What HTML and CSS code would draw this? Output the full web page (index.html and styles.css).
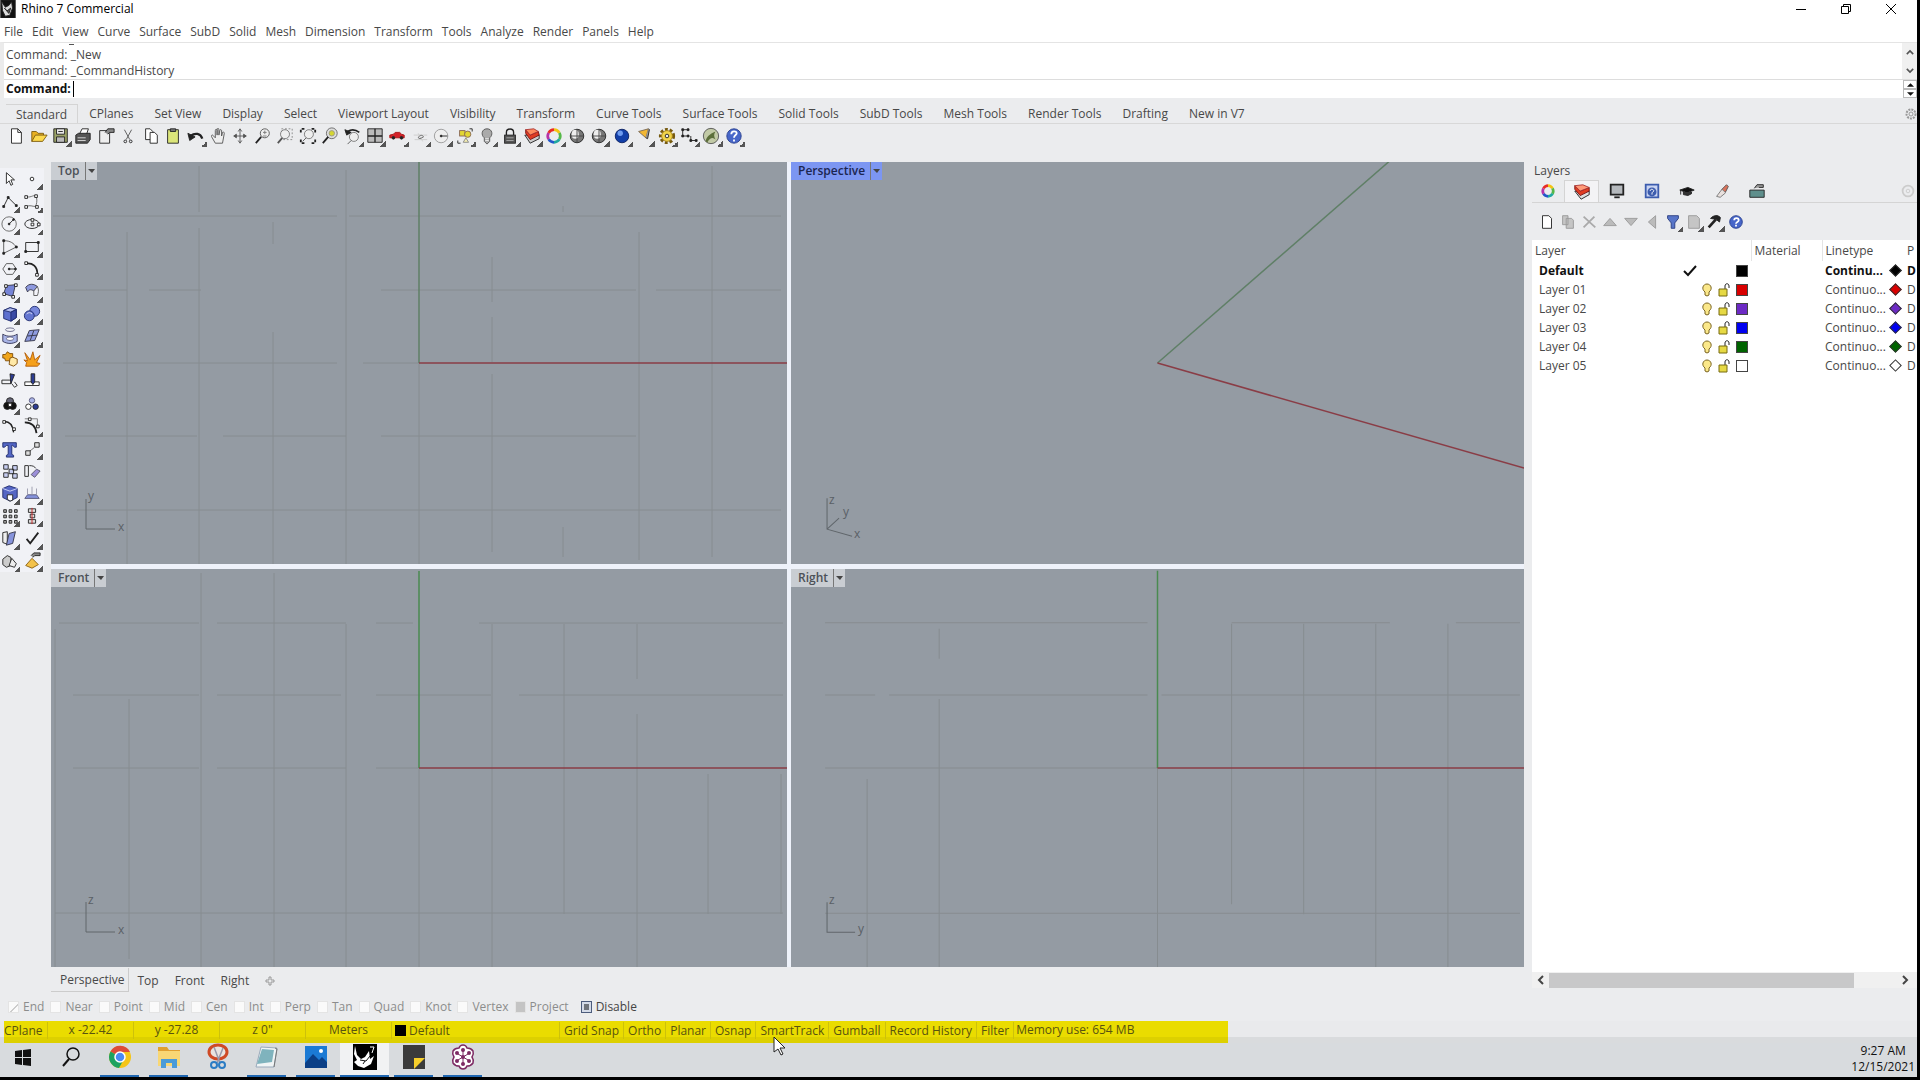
FILE: index.html
```html
<!DOCTYPE html>
<html lang="en">
<head>
  <meta charset="UTF-8" />
  <meta name="viewport" content="width=device-width, initial-scale=1.0" />
  <title>Rhino 7 Commercial</title>
  <link rel="stylesheet" href="styles.css">
</head>
<body>
  <header class="titlebar">
    <svg class="app-icon" viewBox="0 0 16 20"><rect width="16" height="20" fill="#111"/><path d="M1 2l4 6 4-2 3-4 1 7-3 8-5 1-3-6z" fill="#ddd"/><path d="M4 9l3 3 4-3-2 6z" fill="#555"/></svg>
    <h1>Rhino 7 Commercial</h1>
    <div class="window-buttons">
      <button aria-label="Minimize"><svg viewBox="0 0 12 12"><path d="M1 6.500h10"/></svg></button>
      <button aria-label="Restore"><svg viewBox="0 0 12 12"><path d="M1.500 3.500h7v7h-7zM3.500 3V1.500h7v7H9"/></svg></button>
      <button aria-label="Close"><svg viewBox="0 0 12 12"><path d="M1 1l10 10M11 1L1 11"/></svg></button>
    </div>
  </header>

  <nav class="menubar">
    <button>File</button><button>Edit</button><button>View</button><button>Curve</button><button>Surface</button><button>SubD</button><button>Solid</button><button>Mesh</button><button>Dimension</button><button>Transform</button><button>Tools</button><button>Analyze</button><button>Render</button><button>Panels</button><button>Help</button>
  </nav>

  <section class="command">
    <div class="history">
      <div class="history-lines">
        <div class="cut-line"></div>
        <p>Command: _New</p>
        <p>Command: _CommandHistory</p>
      </div>
      <div class="history-scroll">
        <button aria-label="Scroll up"><svg viewBox="0 0 10 8"><path d="M1 6l4-4 4 4"/></svg></button>
        <button aria-label="Scroll down"><svg viewBox="0 0 10 8"><path d="M1 2l4 4 4-4"/></svg></button>
      </div>
    </div>
    <div class="prompt">
      <label for="command">Command:</label>
      <span class="caret"></span>
      <input type="text" id="command" />
      <div class="spinner">
        <button aria-label="Previous"><svg viewBox="0 0 8 4"><path d="M4 0l4 4H0z"/></svg></button>
        <button aria-label="Next"><svg viewBox="0 0 8 4"><path d="M4 4L0 0h8z"/></svg></button>
      </div>
    </div>
  </section>

  <nav class="tabs">
    <button class="active">Standard</button><button>CPlanes</button><button>Set View</button><button>Display</button><button>Select</button><button>Viewport Layout</button><button>Visibility</button><button>Transform</button><button>Curve Tools</button><button>Surface Tools</button><button>Solid Tools</button><button>SubD Tools</button><button>Mesh Tools</button><button>Render Tools</button><button>Drafting</button><button>New in V7</button>
    <button class="tabs-gear" aria-label="Options"><svg viewBox="0 0 12 12"><circle cx="6" cy="6" r="4.500" stroke-width="2" stroke-dasharray="2 1"/><circle cx="6" cy="6" r="2"/></svg></button>
  </nav>

  <div class="toolbar">
    <button aria-label="New"><svg viewBox="0 0 20 20"><path d="M5 2h7l4 4v12H5z" fill="#fff"/><path d="M12 2v4h4"/></svg></button>
    <button aria-label="Open"><svg viewBox="0 0 20 20"><path d="M2 16V5h5l2 2h6v3" fill="#e8b020" stroke="#7a5a10"/><path d="M2 16l4-7h13l-5 7z" fill="#fcd94c" stroke="#7a5a10"/></svg></button>
    <button class="fly" aria-label="Save"><svg viewBox="0 0 20 20"><path d="M2 2h15v15H2z" fill="#9ba366"/><path d="M5 2h9v6H5z" fill="#e8e8e8"/><path d="M5 11h9v6H5z" fill="#bbb"/><path d="M7 5h5"/></svg></button>
    <button aria-label="Print"><svg viewBox="0 0 20 20"><path d="M6 8l3-6h7l-2 6" fill="#fff"/><path d="M2 9l3-2h13v7l-3 4H2z" fill="#555"/><path d="M4 12h9M4 15h9" stroke="#ddd"/></svg></button>
    <button aria-label="Properties"><svg viewBox="0 0 20 20"><path d="M3 4h8l3 3v11H3z" fill="#eee"/><path d="M9 6l3-4h7v4h-5l-2 2" fill="#888"/></svg></button>
    <button aria-label="Cut"><svg viewBox="0 0 20 20"><path d="M6 3l6 11M14 3L8 14" stroke="#555"/><circle cx="7" cy="16" r="1.500"/><circle cx="13" cy="16" r="1.500"/></svg></button>
    <button aria-label="Copy"><svg viewBox="0 0 20 20"><path d="M4 2h5l3 3v9H4z" fill="#fff"/><path d="M9 6h5l3 3v9H9z" fill="#fff"/></svg></button>
    <button aria-label="Paste"><svg viewBox="0 0 20 20"><path d="M4 3h12v15H4z" fill="#dce67a"/><path d="M7 2h6v3H7z" fill="#777"/></svg></button>
    <button class="fly" aria-label="Undo"><svg viewBox="0 0 20 20"><path d="M4 10c5-4 11-3 13 3" stroke-width="2.500"/><path d="M1 7l2 8 6-4z" fill="#222"/></svg></button>
    <button aria-label="Pan"><svg viewBox="0 0 20 20"><path d="M7 18l-4-7c-1-2 1-3 2-1l2 2V4c0-2 2-2 2 0v5V3c0-2 2-2 2 0v6l1-5c0-2 2-1 2 0v6l1-4c1-1 2 0 2 1l-2 11z" fill="#eee" stroke="#555"/></svg></button>
    <button aria-label="Rotate view"><svg viewBox="0 0 20 20"><path d="M10 3v14M4 10h12M8 5l2-3 2 3M8 15l2 3 2-3" stroke="#555"/><path d="M6 8l-3 2 3 2zM14 8l3 2-3 2z" fill="#555" stroke="#555"/></svg></button>
    <button aria-label="Zoom dynamic"><svg viewBox="0 0 20 20"><circle cx="12" cy="7" r="5" fill="#eee" stroke="#555"/><path d="M8 11l-6 7" stroke-width="2"/><path d="M12 4v4M10 6h4M10 10h4" stroke="#777"/></svg></button>
    <button aria-label="Zoom window"><svg viewBox="0 0 20 20"><path d="M6 2h12v12H6z" stroke-dasharray="2 2" stroke="#888"/><circle cx="10" cy="8" r="5" fill="#eee" stroke="#777"/><path d="M7 12l-5 6" stroke-width="2" stroke="#555"/></svg></button>
    <button aria-label="Zoom extents"><svg viewBox="0 0 20 20"><circle cx="11" cy="8" r="5" fill="#eee" stroke="#777"/><path d="M8 12l-4 4" stroke="#555"/><path d="M2 6V2h4M14 2h4v4M18 14v4h-4M6 18H2v-4" stroke-width="2" stroke-dasharray="3 2 3"/></svg></button>
    <button aria-label="Zoom selected"><svg viewBox="0 0 20 20"><circle cx="12" cy="7" r="6" fill="#ddd" stroke="#666"/><circle cx="12" cy="7" r="3" fill="#d5d630" stroke="#998"/><path d="M8 11l-6 7" stroke-width="2"/></svg></button>
    <button class="fly" aria-label="Undo view"><svg viewBox="0 0 20 20"><circle cx="11" cy="11" r="5" fill="#eee" stroke="#777"/><path d="M8 15l-4 4" stroke="#555"/><path d="M4 5c5-3 9-2 13 1" stroke-width="2"/><path d="M1 3l2 6 5-3z" fill="#222"/></svg></button>
    <button class="fly" aria-label="Viewports"><svg viewBox="0 0 20 20"><path d="M2 2h16v15H2z" fill="#bbb"/><path d="M10 2v15M2 10h16" stroke-width="1.500"/></svg></button>
    <button class="fly" aria-label="Set view"><svg viewBox="0 0 20 20"><path d="M2 12V9l4-1 2-2h5l2 2 3 1v3z" fill="#d3222a" stroke="#a11"/><circle cx="6" cy="12" r="1.500" fill="#222"/><circle cx="15" cy="12" r="1.500" fill="#222"/></svg></button>
    <button class="fly" aria-label="CPlane"><svg viewBox="0 0 20 20"><path d="M3 9h15M4 14h14M8 7l5 9" stroke="#ccc"/><path d="M8 12c2-4 5-3 6-1l-4 2z" stroke="#666"/></svg></button>
    <button class="fly" aria-label="Osnap"><svg viewBox="0 0 20 20"><circle cx="9" cy="10" r="7.500" fill="#eee" stroke="#999"/><path d="M9 10h7"/><circle cx="9" cy="10" r="1" fill="#333"/></svg></button>
    <button class="fly" aria-label="Select"><svg viewBox="0 0 20 20"><rect x="4" y="4" width="6" height="6" fill="#e2d634" stroke="#865"/><circle cx="13" cy="8" r="3.500" fill="#e2d634" stroke="#865"/><path d="M8 17l3-5 3 5z" fill="#f5eeb0" stroke="#888"/><path d="M15 2h3v3M2 15v3h3"/></svg></button>
    <button class="fly" aria-label="Hide"><svg viewBox="0 0 20 20"><path d="M7 12C3 9 4 2 10 2s7 7 3 10v4l-3 3-3-3z" fill="#aaa" stroke="#555"/><path d="M8 13h4M8 15h4" stroke="#eee"/></svg></button>
    <button class="fly" aria-label="Lock"><svg viewBox="0 0 20 20"><path d="M6 9V6c0-5 8-5 8 0v3" stroke-width="1.500"/><rect x="4" y="9" width="12" height="9" fill="#555"/><path d="M6 12h8M6 15h8" stroke="#aaa"/></svg></button>
    <button class="fly" aria-label="Layers"><svg viewBox="0 0 20 20"><path d="M2 9l6 9 10-5V9z" fill="#ccc"/><path d="M3 3l5 6 9-4 1 4-10 5-5-7z" fill="#e03c22" stroke="#711"/><path d="M3 3l9-1 5 3-9 4z" fill="#ff8a5c" stroke="#a33"/></svg></button>
    <button class="fly" aria-label="Properties"><svg viewBox="0 0 20 20" class="wheel"><path d="M10 3a7 7 0 0 1 6 3.500" stroke="#f3c412"/><path d="M16 6.500a7 7 0 0 1 0 7" stroke="#55b848"/><path d="M16 13.500a7 7 0 0 1-6 3.500" stroke="#20a8a0"/><path d="M10 17a7 7 0 0 1-6-3.500" stroke="#2357c9"/><path d="M4 13.500a7 7 0 0 1 0-7" stroke="#b632a8"/><path d="M4 6.500A7 7 0 0 1 10 3" stroke="#e82c25"/></svg></button>
    <button aria-label="Shade"><svg viewBox="0 0 20 20"><circle cx="10" cy="10" r="7.500" fill="#777"/><ellipse cx="8" cy="8" rx="4" ry="5" fill="#eee" stroke="none"/><path d="M3 10h14M10 3v14" stroke="#444"/></svg></button>
    <button class="fly" aria-label="Shade all"><svg viewBox="0 0 20 20"><circle cx="10" cy="10" r="7.500" fill="#777"/><ellipse cx="8" cy="8" rx="4" ry="5" fill="#eee" stroke="none"/><path d="M3 10h14M10 3v14" stroke="#444"/></svg></button>
    <button class="fly" aria-label="Render"><svg viewBox="0 0 20 20"><circle cx="10" cy="10" r="7.500" fill="#123fa8" stroke="#0a1f60"/><circle cx="8" cy="7" r="3" fill="#6f9cf0" stroke="none"/></svg></button>
    <button class="fly" aria-label="Spotlight"><svg viewBox="0 0 20 20"><path d="M4 5l11-3-3 10z" fill="#f2b733" stroke="#765"/><path d="M15 2l1 1-2 10-2-1" fill="#999"/></svg></button>
    <button class="fly" aria-label="Options"><svg viewBox="0 0 20 20"><circle cx="10" cy="10" r="7" stroke="#765a10" stroke-width="4" stroke-dasharray="3 2"/><circle cx="10" cy="10" r="6" fill="#f0d34a" stroke="#a8841a"/><circle cx="10" cy="10" r="2" fill="#eee"/></svg></button>
    <button class="fly" aria-label="History"><svg viewBox="0 0 20 20"><path d="M9 3H3v7h6M12 10v5h6"/><path d="M8 2h2v2H8zM2 2h2v2H2zM2 9h2v2H2zM8 9h2v2H8zM11 14h2v2h-2zM17 14h2v2h-2z" fill="#222"/></svg></button>
    <button class="fly" aria-label="Grasshopper"><svg viewBox="0 0 20 20"><circle cx="10" cy="10" r="8.500" fill="#c2caa6" stroke="#555"/><path d="M4 16c1-5 4-8 11-11-2 3-2 5 0 9-3-3-6-2-9 3z" fill="#5c6f3a" stroke="none"/></svg></button>
    <button class="fly" aria-label="Help"><svg viewBox="0 0 20 20"><circle cx="10" cy="10" r="8" fill="#4766c9" stroke="#28408f"/><path d="M7 8c0-4 6-4 6-1 0 2-3 2-3 5M10 14v2" stroke="#fff" stroke-width="2"/></svg></button>
  </div>

  <main class="workspace">
    <aside class="sidebar">
      <div class="tools">
        <button aria-label="Select"><svg viewBox="0 0 20 20"><path d="M6 3v12l3-3 2 5 2-1-2-5h4z" fill="#fff"/></svg></button>
        <button class="fly" aria-label="Point"><svg viewBox="0 0 20 20"><circle cx="10" cy="10" r="2" fill="#fff"/></svg></button>
        <button class="fly" aria-label="Polyline"><svg viewBox="0 0 20 20"><path d="M3 15L8 5l9 9"/><path d="M2 14h2v2H2zM7 4h2v2H7zM16 13h2v2h-2z" fill="#222"/></svg></button>
        <button class="fly" aria-label="Curve"><svg viewBox="0 0 20 20"><path d="M4 4c5 2 9-4 11 1 1 4 0 7-1 10-4 0-6-2-10 0" stroke="#666"/><path d="M2 3h3v3H2zM13 2h3v3h-3zM2 14h3v3H2zM14 14h3v3h-3z" fill="#fff"/></svg></button>
        <button class="fly" aria-label="Circle"><svg viewBox="0 0 20 20"><circle cx="9" cy="10" r="8" stroke="#666"/><path d="M9 10l5-5"/><circle cx="9" cy="10" r="1" fill="#222"/><circle cx="14" cy="5" r="1" fill="#222"/></svg></button>
        <button class="fly" aria-label="Ellipse"><svg viewBox="0 0 20 20"><ellipse cx="10" cy="10" rx="8" ry="5"/><path d="M9 4h3v3H9zM9 9h3v3H9zM16 9h3v3h-3z" fill="#fff"/></svg></button>
        <button class="fly" aria-label="Arc"><svg viewBox="0 0 20 20"><path d="M3 17V3c8 0 11 3 14 7z" stroke="#555"/><path d="M2 2h2v2H2zM2 16h2v2H2zM16 9h2v2h-2z" fill="#222"/></svg></button>
        <button class="fly" aria-label="Rectangle"><svg viewBox="0 0 20 20"><path d="M3 5h14v10H3z"/><path d="M2 14h2v2H2zM16 4h2v2h-2z" fill="#222"/></svg></button>
        <button class="fly" aria-label="Polygon"><svg viewBox="0 0 20 20"><path d="M6 4h7l4 6-4 6H6l-4-6z" stroke="#555"/><path d="M9 10h7"/><circle cx="9" cy="10" r="1" fill="#222"/><circle cx="16" cy="10" r="1" fill="#222"/></svg></button>
        <button class="fly" aria-label="Fillet"><svg viewBox="0 0 20 20"><path d="M3 4c8-1 13 3 13 12" stroke-width="2"/><path d="M2 2h3v3H2zM14 15h3v3h-3z" fill="#fff"/></svg></button>
        <button class="fly" aria-label="Surface from points"><svg viewBox="0 0 20 20"><path d="M6 4l10-1-3 13-10-3z" fill="#7684d6" stroke="#334"/><path d="M4 3h3v3H4zM15 2h3v3h-3zM2 12h3v3H2zM12 15h3v3h-3z" fill="#fff"/></svg></button>
        <button class="fly" aria-label="Sweep"><svg viewBox="0 0 20 20"><path d="M3 6c4-5 9-4 13-1l-4 5c-3-2-5-2-7 1z" fill="#8d98de" stroke="#334"/><path d="M12 10l4-5c2 4 1 7 0 10h-4z" fill="#f4f4fa" stroke="#555"/></svg></button>
        <button class="fly" aria-label="Box"><svg viewBox="0 0 20 20"><path d="M3 6l7-3 7 2v9l-6 4-8-3z" fill="#5e70cf" stroke="#1f2b6d"/><path d="M3 6l8 2 6-3-7-2z" fill="#b4beef" stroke="#1f2b6d"/><path d="M11 8l6-3v9l-6 4z" fill="#3a4aa6" stroke="#1f2b6d"/></svg></button>
        <button class="fly" aria-label="Sphere union"><svg viewBox="0 0 20 20"><circle cx="13" cy="7" r="5.500" fill="#7787db" stroke="#1f2b6d"/><circle cx="7" cy="12" r="5.500" fill="#6375d0" stroke="#1f2b6d"/><path d="M4 10c2-2 4-2 6 0" stroke="#dde"/></svg></button>
        <button class="fly" aria-label="Project"><svg viewBox="0 0 20 20"><ellipse cx="10" cy="3" rx="5" ry="2" stroke="#668"/><path d="M2 8c5 3 11 3 16 0v8c-5 3-11 3-16 0z" fill="#a9b5e8" stroke="#335"/><ellipse cx="10" cy="13" rx="4" ry="2" fill="#fff" stroke="#668"/></svg></button>
        <button class="fly" aria-label="Mesh"><svg viewBox="0 0 20 20"><path d="M7 4l11-1-5 12-11 1z" fill="#8f9ce0" stroke="#334"/><path d="M5 10l11-1M12 4L8 15" stroke="#334"/></svg></button>
        <button aria-label="Boolean"><svg viewBox="0 0 20 20"><path d="M2 5h3l2-3 3 2h3v5l-3 3H5l-1-3H2z" fill="#f0a51c" stroke="#7c4b08"/><path d="M10 9l3-1 5 2v5l-4 3-5-2z" fill="#ffe9a8" stroke="#7c4b08"/></svg></button>
        <button aria-label="Explode"><svg viewBox="0 0 20 20"><path d="M2 3l6 8 3-9 2 9 6-5-4 8 4 1-3 3H3l1-4-3-3 4 1z" fill="#f5a01c" stroke="#b35c08"/></svg></button>
        <button aria-label="Trim"><svg viewBox="0 0 20 20"><path d="M1 9h10v4H1zM12 13l3 4 3-2-3-4"/><path d="M10 2l5 1-4 10z" fill="#2c3c94"/></svg></button>
        <button aria-label="Split"><svg viewBox="0 0 20 20"><path d="M2 11h16v4H2z" fill="#fff"/><path d="M9 2h4v9l-2 3-2-3z" fill="#2c3c94"/></svg></button>
        <button class="fly" aria-label="Group"><svg viewBox="0 0 20 20"><circle cx="10" cy="7" r="4" fill="#667"/><circle cx="7" cy="12" r="4" fill="#111"/><circle cx="13" cy="12" r="4" fill="#111"/><circle cx="10" cy="11" r="2" fill="#fff"/></svg></button>
        <button aria-label="Ungroup"><svg viewBox="0 0 20 20"><circle cx="10" cy="6" r="3" fill="#aab4e8" stroke="#557"/><circle cx="6" cy="13" r="3" fill="#fff"/><circle cx="14" cy="13" r="3" fill="#2c3c94"/></svg></button>
        <button aria-label="Edit points"><svg viewBox="0 0 20 20"><path d="M4 5c6 0 9 4 10 12" stroke-width="1.500"/><path d="M2 4h3v3H2zM13 12h3v3h-3z" fill="#fff"/></svg></button>
        <button class="fly" aria-label="Control points"><svg viewBox="0 0 20 20"><path d="M2 6c8 0 12 4 13 12" stroke-width="2"/><path d="M2 2h14v8" stroke="#777"/><path d="M6 1h3v3H6zM15 9h3v3h-3z" fill="#fff"/></svg></button>
        <button aria-label="Text"><svg viewBox="0 0 20 20"><path d="M2 3h15v5h-2l-2-2h-1v10l2 1v2H6v-2l2-1V6H6L4 8H2z" fill="#5467c5" stroke="#1f2b6d"/></svg></button>
        <button class="fly" aria-label="Move"><svg viewBox="0 0 20 20"><path d="M3 12h5v5H3zM13 3h5v5h-5z" fill="#ddd"/><path d="M8 12l5-4" stroke-dasharray="2 1"/></svg></button>
        <button aria-label="Array"><svg viewBox="0 0 20 20"><path d="M3 3h5v5H3zM3 12h5v5H3zM9 8h5v5H9zM13 4h5v5h-5zM13 13h5v5h-5z" fill="#c7cdf0"/></svg></button>
        <button aria-label="Orient"><svg viewBox="0 0 20 20"><path d="M2 4h4v12H2z"/><path d="M9 14l6-6 4 2-6 7z" fill="#9b8fd8" stroke="#556"/><path d="M7 4c4 0 6 1 7 3"/></svg></button>
        <button class="fly" aria-label="Blend"><svg viewBox="0 0 20 20"><path d="M2 5l7-3 9 3v10l-8 4-8-4z" fill="#5566c4" stroke="#1f2b6d"/><path d="M2 5l8 3 8-3" stroke="#cfd6fa"/><path d="M7 12h6v6l-3 1-3-2z" fill="#fff"/></svg></button>
        <button class="fly" aria-label="Lights"><svg viewBox="0 0 20 20"><path d="M2 16h16l-3-4H5z" fill="#8593dc" stroke="#557"/><path d="M5 5v7M10 3v9M15 5v7" stroke="#99a"/></svg></button>
        <button class="fly" aria-label="Grid array"><svg viewBox="0 0 20 20"><path d="M3 3h3v3H3zM9 3h3v3H9zM15 3h3v3h-3zM3 9h3v3H3zM9 9h3v3H9zM15 9h3v3h-3zM3 15h3v3H3zM9 15h3v3H9zM15 15h3v3h-3z" fill="#aaa"/></svg></button>
        <button class="fly" aria-label="Align"><svg viewBox="0 0 20 20"><path d="M6 2h8v4H6zM8 8h5v4H8zM6 14h8v4H6z" fill="#ddd"/><path d="M10 1v18" stroke="#c22"/></svg></button>
        <button class="fly" aria-label="Block"><svg viewBox="0 0 20 20"><path d="M2 4l5-1v14l-5-2z" fill="#eee"/><path d="M9 5l7-2-3 13-7 2z" fill="#8794dc" stroke="#334"/></svg></button>
        <button class="fly" aria-label="Check"><svg viewBox="0 0 20 20"><path d="M4 11l4 5 9-12" stroke-width="2"/></svg></button>
        <button class="fly" aria-label="Primitives"><svg viewBox="0 0 20 20"><path d="M2 8l5-4 4 2v9l-5 2-4-3z" fill="#ccc"/><path d="M9 15l3-8 5 6-2 4z" fill="#eee"/></svg></button>
        <button class="fly" aria-label="Named position"><svg viewBox="0 0 20 20"><path d="M3 15l7-8 7 7-7 4z" fill="#f3c24a" stroke="#8a6010"/><path d="M9 4l3-3h7v3h-6l-2 2" fill="#888"/></svg></button>
      </div>
    </aside>

    <section class="stage">
      <div class="viewports">
        <div class="viewport">
          <svg class="scene" viewBox="0 0 736 402" preserveAspectRatio="xMidYMid slice">
            <g class="grid">
              <path d="M76 70V402M148 4V50M148 66V402M222 60V82M222 170V402M295 8V402M368 201V402M441 95V140M441 155V200M441 212V390M512 44V50M512 365V395M588 70V398M661 4V395"/>
              <path d="M2 54H286M298 54H730M14 128H76M98 128H150M330 128H585M605 128H730M12 201H286M312 201H368M14 274H146M172 274H295M330 274H585M26 348H730"/>
            </g>
            <path class="axis-y" d="M368 0V201"/>
            <path class="axis-x" d="M368 201H736"/>
            <path class="tripod" d="M35 337V367H64"/>
            <text x="37" y="338">y</text><text x="67" y="369">x</text>
          </svg>
          <div class="vp-tag"><button>Top</button><button class="vp-menu" aria-label="Top menu"><svg viewBox="0 0 7 4"><path d="M0 0h7L4 4z"/></svg></button></div>
        </div>
        <div class="viewport">
          <svg class="scene" viewBox="0 0 732 402" preserveAspectRatio="xMidYMid slice">
            <path class="axis-y" d="M366 201L597 0"/>
            <path class="axis-x" d="M366 201L732 306"/>
            <path class="tripod" d="M36 336V367L61 374M36 367L48 356"/>
            <text x="38" y="342">z</text><text x="52" y="354">y</text><text x="63" y="376">x</text>
          </svg>
          <div class="vp-tag active"><button>Perspective</button><button class="vp-menu" aria-label="Perspective menu"><svg viewBox="0 0 7 4"><path d="M0 0h7L4 4z"/></svg></button></div>
        </div>
        <div class="viewport">
          <svg class="scene" viewBox="0 0 736 398" preserveAspectRatio="xMidYMid slice">
            <g class="grid">
              <path d="M4 60V398M78 130V390M150 4V398M223 4V398M295 55V398M368 199V398M441 55V398M513 55V345M586 55V110M586 145V398M657 205V345M730 205V345"/>
              <path d="M8 54H148M166 54H295M325 54H362M428 54H732M22 126H148M166 126H290M325 126H440M468 126H732M22 199H148M166 199H295M325 199H368M4 344H732"/>
            </g>
            <path class="axis-y bright" d="M368 2V199"/>
            <path class="axis-x" d="M368 199H736"/>
            <path class="tripod" d="M35 333V363H64"/>
            <text x="37" y="335">z</text><text x="67" y="365">x</text>
          </svg>
          <div class="vp-tag"><button>Front</button><button class="vp-menu" aria-label="Front menu"><svg viewBox="0 0 7 4"><path d="M0 0h7L4 4z"/></svg></button></div>
        </div>
        <div class="viewport">
          <svg class="scene" viewBox="0 0 732 398" preserveAspectRatio="xMidYMid slice">
            <g class="grid">
              <path d="M76 210V398M148 60V90M148 130V398M366 199V398M440 55V335M512 55V345M584 55V398M656 55V398"/>
              <path d="M34 54H356M440 54H598M664 54H728M34 126H84M98 126H356M370 126H728M34 199H366M34 344H728"/>
            </g>
            <path class="axis-y bright" d="M366 2V199"/>
            <path class="axis-x" d="M366 199H732"/>
            <path class="tripod" d="M36 333V363H64"/>
            <text x="38" y="335">z</text><text x="67" y="364">y</text>
          </svg>
          <div class="vp-tag"><button>Right</button><button class="vp-menu" aria-label="Right menu"><svg viewBox="0 0 7 4"><path d="M0 0h7L4 4z"/></svg></button></div>
        </div>
      </div>
      <nav class="view-tabs">
        <button class="active">Perspective</button><button>Top</button><button>Front</button><button>Right</button>
        <button aria-label="New viewport"><svg viewBox="0 0 10 10"><path d="M4 1h2v3h3v2H6v3H4V6H1V4h3z"/></svg></button>
      </nav>
    </section>

    <aside class="panel">
      <h2>Layers</h2>
      <div class="panel-tabs">
        <button aria-label="Properties"><svg viewBox="0 0 20 20" class="wheel"><path d="M10 4a6 6 0 0 1 5 3" stroke="#f3c412"/><path d="M15 7a6 6 0 0 1 0 6" stroke="#55b848"/><path d="M15 13a6 6 0 0 1-5 3" stroke="#20a8a0"/><path d="M10 16a6 6 0 0 1-5-3" stroke="#2357c9"/><path d="M5 13a6 6 0 0 1 0-6" stroke="#b632a8"/><path d="M5 7a6 6 0 0 1 5-3" stroke="#e82c25"/></svg></button>
        <button class="active" aria-label="Layers"><svg viewBox="0 0 20 20"><path d="M2 9l7 9 9-5V9z" fill="#ddd"/><path d="M2 3l6 6 10-4v4l-10 5-6-7z" fill="#e03c22" stroke="#711"/><path d="M2 3l9-1 7 3-10 4z" fill="#ff9a78" stroke="#a33"/></svg></button>
        <button aria-label="Display"><svg viewBox="0 0 20 20"><path d="M3 3h14v11H3z" fill="#b5b9bd" stroke-width="2"/><path d="M7 17h6" stroke-width="2"/></svg></button>
        <button aria-label="Help"><svg viewBox="0 0 20 20"><path d="M3 3h14v14H3z" fill="#c9d4f2" stroke="#3c5cae" stroke-width="2"/><circle cx="10" cy="11" r="5" fill="#3c5cae" stroke="none"/><path d="M8 10c0-3 4-2 4 0l-2 2v2" stroke="#fff"/></svg></button>
        <button aria-label="Tutorials"><svg viewBox="0 0 20 20"><path d="M2 9l9-3 7 3-8 3z" fill="#111"/><path d="M6 11v3l5 1 4-2v-2" fill="#333"/><path d="M3 9v5"/></svg></button>
        <button aria-label="Libraries"><svg viewBox="0 0 20 20"><path d="M10 8l5-5 2 2-3 6-5 4z" fill="#d9735c" stroke="#555"/><path d="M10 8l4 4-6 5-4-1z" fill="#e8e0dd" stroke="#777"/></svg></button>
        <button aria-label="Notes"><svg viewBox="0 0 20 20"><path d="M2 9h16v8H2z" fill="#5f8f8c"/><path d="M7 7l3-4h7v3h-5" fill="#999"/></svg></button>
        <button class="panel-gear" aria-label="Panel options"><svg viewBox="0 0 20 20"><circle cx="10" cy="10" r="6" stroke="#ccc" stroke-width="2"/><circle cx="10" cy="10" r="2" stroke="#ccc"/></svg></button>
      </div>
      <div class="panel-tools">
        <button aria-label="New layer"><svg viewBox="0 0 20 20"><path d="M5 3h7l3 3v11H5z" fill="#fff"/></svg></button>
        <button aria-label="New sublayer"><svg viewBox="0 0 20 20"><path d="M4 3h6v10H4zM8 6h6l2 2v9H8z" fill="#c5c5c5" stroke="#999"/></svg></button>
        <button aria-label="Delete"><svg viewBox="0 0 20 20"><path d="M4 4l13 12M16 4L4 16" stroke="#aaa" stroke-width="2"/></svg></button>
        <button aria-label="Move up"><svg viewBox="0 0 20 20"><path d="M3 14l7-8 7 8z" fill="#bbb" stroke="#999"/></svg></button>
        <button aria-label="Move down"><svg viewBox="0 0 20 20"><path d="M3 6l7 8 7-8z" fill="#bbb" stroke="#999"/></svg></button>
        <button aria-label="Move left"><svg viewBox="0 0 20 20"><path d="M14 3l-8 7 8 7z" fill="#bbb" stroke="#999"/></svg></button>
        <button class="fly" aria-label="Filter"><svg viewBox="0 0 20 20"><path d="M4 3h12v3l-4 5v6H8v-6L4 6z" fill="#5875c8" stroke="#2a3d80"/></svg></button>
        <button class="fly" aria-label="Layer states"><svg viewBox="0 0 20 20"><path d="M4 3h9l3 3v11H4z" fill="#c5c5c5" stroke="#999"/></svg></button>
        <button class="fly" aria-label="Tools"><svg viewBox="0 0 20 20"><path d="M3 16l8-9" stroke-width="3"/><path d="M5 6c4-4 8-4 11-1l-1 5-4-3z" fill="#222"/></svg></button>
        <button aria-label="Help"><svg viewBox="0 0 20 20"><circle cx="10" cy="10" r="7" fill="#4766c9" stroke="#28408f"/><path d="M8 8c0-3 5-3 5 0 0 2-3 2-3 4M10 13v2" stroke="#fff" stroke-width="2"/></svg></button>
      </div>
      <div class="layer-list">
        <table>
          <colgroup><col class="c-name"><col class="c-icon"><col class="c-icon"><col class="c-icon"><col class="c-icon"><col class="c-mat"><col class="c-line"><col class="c-print"><col></colgroup>
          <thead>
            <tr><th>Layer</th><th></th><th></th><th></th><th></th><th class="sep">Material</th><th class="sep">Linetype</th><th></th><th>P</th></tr>
          </thead>
          <tbody>
            <tr class="current"><td>Default</td><td><svg viewBox="0 0 14 14"><path d="M1 7l4 4 8-9" stroke="#111" stroke-width="2"/></svg></td><td></td><td></td><td><i class="swatch black"></i></td><td></td><td>Continu...</td><td><i class="diamond black"></i></td><td>D</td></tr>
            <tr><td>Layer 01</td><td></td><td><svg viewBox="0 0 14 14"><path d="M5 9C1 6 3 1 7 1s6 5 2 8v3l-2 1-2-1z" fill="#fbe88a" stroke="#7a6420"/></svg></td><td><svg viewBox="0 0 14 14"><path d="M8 6V3c0-3 4-3 4 0v2"/><path d="M2 6h8v7H2z" fill="#e6d944" stroke="#776a10"/></svg></td><td><i class="swatch red"></i></td><td></td><td>Continuo...</td><td><i class="diamond red"></i></td><td>D</td></tr>
            <tr><td>Layer 02</td><td></td><td><svg viewBox="0 0 14 14"><path d="M5 9C1 6 3 1 7 1s6 5 2 8v3l-2 1-2-1z" fill="#fbe88a" stroke="#7a6420"/></svg></td><td><svg viewBox="0 0 14 14"><path d="M8 6V3c0-3 4-3 4 0v2"/><path d="M2 6h8v7H2z" fill="#e6d944" stroke="#776a10"/></svg></td><td><i class="swatch purple"></i></td><td></td><td>Continuo...</td><td><i class="diamond purple"></i></td><td>D</td></tr>
            <tr><td>Layer 03</td><td></td><td><svg viewBox="0 0 14 14"><path d="M5 9C1 6 3 1 7 1s6 5 2 8v3l-2 1-2-1z" fill="#fbe88a" stroke="#7a6420"/></svg></td><td><svg viewBox="0 0 14 14"><path d="M8 6V3c0-3 4-3 4 0v2"/><path d="M2 6h8v7H2z" fill="#e6d944" stroke="#776a10"/></svg></td><td><i class="swatch blue"></i></td><td></td><td>Continuo...</td><td><i class="diamond blue"></i></td><td>D</td></tr>
            <tr><td>Layer 04</td><td></td><td><svg viewBox="0 0 14 14"><path d="M5 9C1 6 3 1 7 1s6 5 2 8v3l-2 1-2-1z" fill="#fbe88a" stroke="#7a6420"/></svg></td><td><svg viewBox="0 0 14 14"><path d="M8 6V3c0-3 4-3 4 0v2"/><path d="M2 6h8v7H2z" fill="#e6d944" stroke="#776a10"/></svg></td><td><i class="swatch green"></i></td><td></td><td>Continuo...</td><td><i class="diamond green"></i></td><td>D</td></tr>
            <tr><td>Layer 05</td><td></td><td><svg viewBox="0 0 14 14"><path d="M5 9C1 6 3 1 7 1s6 5 2 8v3l-2 1-2-1z" fill="#fbe88a" stroke="#7a6420"/></svg></td><td><svg viewBox="0 0 14 14"><path d="M8 6V3c0-3 4-3 4 0v2"/><path d="M2 6h8v7H2z" fill="#e6d944" stroke="#776a10"/></svg></td><td><i class="swatch white"></i></td><td></td><td>Continuo...</td><td><i class="diamond white"></i></td><td>D</td></tr>
          </tbody>
        </table>
      </div>
      <div class="hscroll">
        <button aria-label="Scroll left"><svg viewBox="0 0 8 10"><path d="M6 1L2 5l4 4"/></svg></button>
        <div class="track"><div class="thumb"></div></div>
        <button aria-label="Scroll right"><svg viewBox="0 0 8 10"><path d="M2 1l4 4-4 4"/></svg></button>
      </div>
    </aside>
  </main>

  <form class="osnap">
    <label><input type="checkbox" checked>End</label>
    <label><input type="checkbox">Near</label>
    <label><input type="checkbox">Point</label>
    <label><input type="checkbox">Mid</label>
    <label><input type="checkbox">Cen</label>
    <label><input type="checkbox">Int</label>
    <label><input type="checkbox">Perp</label>
    <label><input type="checkbox">Tan</label>
    <label><input type="checkbox">Quad</label>
    <label><input type="checkbox">Knot</label>
    <label><input type="checkbox">Vertex</label>
    <label><input type="checkbox" class="grey">Project</label>
    <label class="disable"><input type="checkbox" class="filled">Disable</label>
  </form>

  <footer class="status-row">
    <div class="status">
      <button class="s-plane">CPlane</button><span class="s-coord">x -22.42</span><span class="s-coord">y -27.28</span><span class="s-coord">z 0"</span><span class="s-coord">Meters</span><button class="s-layer"><i></i>Default</button><button>Grid Snap</button><button>Ortho</button><button>Planar</button><button>Osnap</button><button>SmartTrack</button><button>Gumball</button><button>Record History</button><button>Filter</button><span class="s-memory">Memory use: 654 MB</span>
    </div>
  </footer>

  <div class="taskbar">
    <button aria-label="Start"><svg viewBox="0 0 24 28"><path d="M4 8l7-1v7H4zM12 7l8-1v8h-8zM4 15h7v7l-7-1zM12 15h8v8l-8-1z" fill="#111" stroke="none"/></svg></button>
    <button aria-label="Search"><svg viewBox="0 0 24 28"><circle cx="14" cy="11" r="6" stroke="#111" stroke-width="1.500"/><path d="M10 16l-6 7" stroke="#111" stroke-width="2"/></svg></button>
    <button class="open" aria-label="Chrome"><svg viewBox="0 0 24 28"><circle cx="12" cy="14" r="11" fill="#f5c518" stroke="none"/><path d="M12 14L2.500 8.500A11 11 0 0 1 22 9H12z" fill="#dd4b39" stroke="none"/><path d="M12 14L2.500 8.500A11 11 0 0 0 11 25l5-9z" fill="#1da260" stroke="none"/><circle cx="12" cy="14" r="5" fill="#4a8af4" stroke="#fff" stroke-width="1.500"/></svg></button>
    <button class="open" aria-label="Explorer"><svg viewBox="0 0 24 28"><path d="M1 4h9l2 3h11v6H1z" fill="#e0a030" stroke="none"/><path d="M1 8h22v15H1z" fill="#f8d775" stroke="none"/><path d="M4 25v-9h16v9h-5v-5H9v5z" fill="#4a9bd8" stroke="none"/></svg></button>
    <button aria-label="Snipping Tool"><svg viewBox="0 0 24 28"><ellipse cx="12" cy="9" rx="9" ry="7" fill="#e9e3df" stroke="#cf4a25" stroke-width="3"/><path d="M8 4l6 16M17 5l-6 15" stroke="#99a" stroke-width="1.500"/><circle cx="8" cy="22" r="3" stroke="#2b7cc4" stroke-width="2"/><circle cx="16" cy="22" r="3" stroke="#2b7cc4" stroke-width="2"/></svg></button>
    <button class="open" aria-label="Notepad"><svg viewBox="0 0 24 28"><path d="M6 4l16 1-3 19H1z" fill="#f0f4f5" stroke="#9ab" /><path d="M7 6l12 1-2 12-15 2z" fill="#7fb3bd" stroke="none"/><path d="M20 5l2 1-3 18" stroke="#777"/></svg></button>
    <button class="open" aria-label="Photos"><svg viewBox="0 0 24 28"><path d="M1 3h22v22H1z" fill="#1b7ad4" stroke="none"/><path d="M1 20l8-9 6 6 3-3 5 5v6H1z" fill="#0b3f86" stroke="none"/><circle cx="17" cy="8" r="2" fill="#fff" stroke="none"/></svg></button>
    <button class="open active" aria-label="Rhino"><svg viewBox="0 0 24 28"><path d="M0 1h24v26H0z" fill="#000" stroke="none"/><path d="M2 3l2 9 4 4 4-2 4-6 1 8 4-3-3 8-7 4-6-2-4-4 3-2-3-6z" fill="#fff" stroke="none"/><path d="M7 17l6 1 4-5M10 21l2-3" stroke="#111"/><path d="M17 4h4l-2 6" stroke="#fff"/></svg></button>
    <button class="open" aria-label="Sticky Notes"><svg viewBox="0 0 24 28"><path d="M1 2h22v24H1z" fill="#3b3b3b" stroke="none"/><path d="M12 15h11L12 26z" fill="#f7cf2b" stroke="none"/></svg></button>
    <button class="open" aria-label="GoToMeeting"><svg viewBox="0 0 24 28"><path d="M12 2q3 0 4 3 4 0 6 3 1 3-1 6 2 3 1 6-2 3-6 3-1 3-4 3t-4-3q-4 0-6-3-1-3 1-6-2-3-1-6 2-3 6-3 1-3 4-3z" fill="#fff" stroke="#7d2a63" stroke-width="1.500"/><path d="M12 8v12M7 11l10 6M17 11L7 17" stroke="#7d2a63"/><g fill="#7d2a63" stroke="none"><circle cx="12" cy="14" r="2"/><circle cx="12" cy="7" r="2"/><circle cx="12" cy="21" r="2"/><circle cx="6" cy="10" r="2"/><circle cx="18" cy="10" r="2"/><circle cx="6" cy="18" r="2"/><circle cx="18" cy="18" r="2"/></g></svg></button>
    <div class="clock"><span>9:27 AM</span><span>12/15/2021</span></div>
  </div>

  <svg class="cursor" viewBox="0 0 14 20"><path d="M1 1v15l4-3 3 6 2-1-3-6h5z" fill="#fff" stroke="#222"/></svg>
</body>
</html>
```
FILE: styles.css
```css
* {
  box-sizing: border-box;
}
body {
  font-family: "Open Sans", "Noto Sans", sans-serif;
  font-size: 12px;
  line-height: 16px;
  color: #484848;
  background-color: #ebecee;
  margin: 0;
  height: 100vh;
  display: flex;
  flex-direction: column;
  overflow: hidden;
  border-right: 3px solid #000;
  border-bottom: 3px solid #000;
}
h1, h2, p {
  margin: 0;
  font-size: 12px;
  font-weight: normal;
}
button {
  font: inherit;
  color: inherit;
  background: none;
  border: none;
  padding: 0;
  white-space: nowrap;
}
svg {
  display: block;
  fill: none;
  stroke: #222;
}

/* title and menu */
.titlebar {
  display: flex;
  align-items: center;
  height: 18px;
  background: #fff;
  color: #000;
}
.app-icon {
  width: 16px;
  height: 18px;
  margin-right: 5px;
}
.window-buttons {
  display: flex;
  margin-left: auto;
  padding-right: 4px;
}
.window-buttons button {
  width: 45px;
  display: flex;
  justify-content: center;
}
.window-buttons svg {
  width: 12px;
  height: 12px;
  stroke: #000;
}
.menubar {
  display: flex;
  align-items: center;
  gap: 9px;
  height: 24px;
  padding: 3px 0 0 4px;
  background: #fff;
}

/* command line */
.command {
  border-top: 1px solid #e4e4e4;
  border-left: 4px solid #ebebeb;
}
.history {
  display: flex;
  height: 36px;
  background: #fff;
}
.history-lines {
  flex: 1;
  display: flex;
  flex-direction: column;
  justify-content: flex-end;
  padding-left: 2px;
}
/* bottom edge of the line scrolled out of view */
.cut-line {
  width: 5px;
  height: 1px;
  margin: 0 0 2px 63px;
  background: #555;
}
.history-scroll {
  width: 15px;
  display: flex;
  flex-direction: column;
  justify-content: space-around;
  align-items: center;
  background: #f0f0f0;
}
.history-scroll svg {
  width: 8px;
  height: 7px;
  stroke: #555;
  stroke-width: 2;
}
.prompt {
  display: flex;
  align-items: center;
  height: 19px;
  border-top: 1px solid #ddd;
  background: #fff;
  padding-left: 2px;
}
.prompt label {
  font-weight: bold;
  color: #111;
}
.caret {
  width: 1px;
  height: 16px;
  margin-left: 2px;
  background: #000;
}
.prompt input {
  flex: 1;
  border: none;
  outline: none;
  font: inherit;
  padding: 0;
}
.spinner {
  width: 14px;
  display: flex;
  flex-direction: column;
}
.spinner button {
  height: 9px;
  border: 1px solid #bbb;
  display: flex;
  align-items: center;
  justify-content: center;
}
.spinner svg {
  width: 7px;
  height: 4px;
  fill: #111;
  stroke: none;
}

/* toolbar tabs */
.tabs {
  display: flex;
  align-items: stretch;
  gap: 1px;
  height: 20px;
  margin-top: 6px;
  padding-left: 6px;
  border-bottom: 1px solid #d8d8d8;
}
.tabs button {
  padding: 1px 10px 0;
}
.tabs .active {
  border-top: 1px solid #d4d4d4;
  border-right: 1px solid #d4d4d4;
}
.tabs .tabs-gear {
  margin-left: auto;
  padding: 0;
}
.tabs-gear svg {
  width: 12px;
  height: 12px;
  stroke: #999;
}
.toolbar {
  display: grid;
  grid-template-columns: repeat(33, 1fr);
  width: 740px;
  height: 38px;
  padding-top: 1px;
  margin-left: 5px;
}
.toolbar button, .tools button, .panel-tools button {
  display: flex;
  align-items: center;
  justify-content: center;
}
.toolbar button {
  height: 22px;
}
.toolbar svg, .tools svg, .panel-tools svg, .panel-tabs svg {
  width: 18px;
  height: 18px;
}
.fly {
  background: linear-gradient(135deg, transparent 50%, #555 50%) no-repeat right bottom / 6px 6px;
}
.wheel {
  stroke-width: 3;
}

/* workspace */
.workspace {
  flex: 1;
  min-height: 0;
  display: flex;
}
.sidebar {
  width: 51px;
  padding-top: 6px;
}
.tools {
  display: grid;
  grid-template-columns: 20px 23px;
  grid-template-rows: repeat(18, 1fr);
  height: 404px;
  width: 44px;
  background: #f1f2f6;
}
.stage {
  flex: 1;
  min-width: 0;
  display: flex;
  flex-direction: column;
}
.viewports {
  flex: 1;
  min-height: 0;
  display: grid;
  grid-template-columns: 736fr 733fr;
  grid-template-rows: 402fr 398fr;
  gap: 5px 4px;
  background: #eef2fa;
}
.viewport {
  position: relative;
  min-height: 0;
  overflow: hidden;
  background: #949ba3;
}
.scene {
  width: 100%;
  height: 100%;
}
.grid {
  stroke: #868c90;
}
.axis-x {
  stroke: #8a3d46;
  stroke-width: 1.5;
}
.axis-y {
  stroke: #5f7f66;
  stroke-width: 1.5;
}
.axis-y.bright {
  stroke: #4a8a50;
}
.tripod {
  stroke: #60666b;
}
.scene text {
  font-size: 12px;
  fill: #5a6066;
  stroke: none;
}
.vp-tag {
  position: absolute;
  top: 0;
  left: 0;
  display: flex;
  height: 18px;
  background: #c9cdd2;
  color: #4c5157;
}
.vp-tag button {
  padding: 0 5px 0 7px;
  font-weight: 600;
}
.vp-tag .vp-menu {
  padding: 0 2px;
  border-left: 1px solid #777;
}
.vp-menu svg {
  width: 7px;
  height: 4px;
  fill: #444;
  stroke: none;
}
.vp-tag.active {
  background: #7c96f2;
  color: #1b2550;
}
.view-tabs {
  display: flex;
  align-items: center;
  height: 25px;
}
.view-tabs button {
  padding: 2px 8px 0;
  height: 24px;
}
.view-tabs .active {
  border-right: 1px solid #ccc;
  border-bottom: 1px solid #ccc;
  padding: 2px 4px 0 9px;
}
.view-tabs svg {
  width: 10px;
  height: 10px;
  stroke: #999;
}

/* layers panel */
.panel {
  width: 393px;
  display: flex;
  flex-direction: column;
  padding: 1px 0 4px 8px;
}
.panel h2 {
  height: 17px;
  padding-left: 2px;
}
.panel-tabs {
  display: flex;
  height: 23px;
  border-bottom: 1px solid #d4d4d4;
}
.panel-tabs button {
  width: 35px;
  display: flex;
  align-items: center;
  justify-content: center;
}
.panel-tabs button:first-child {
  width: 32px;
}
.panel-tabs .active {
  border: 1px solid #d4d4d4;
  border-bottom: none;
  background: #f3f3f5;
}
.panel-tabs .panel-gear {
  width: 18px;
  margin-left: auto;
}
.panel-tools {
  display: flex;
  height: 37px;
  padding: 8px 0 8px 4px;
}
.panel-tools button {
  width: 21px;
}
.layer-list {
  flex: 1;
  background: #fff;
  overflow: hidden;
}
.layer-list table {
  width: 100%;
  table-layout: fixed;
  border-collapse: collapse;
}
.c-name { width: 151px; }
.c-icon { width: 17px; }
.c-mat { width: 71px; }
.c-line { width: 65px; }
.c-print { width: 17px; }
.layer-list th, .layer-list td {
  height: 19px;
  padding: 0;
  text-align: left;
  font-weight: normal;
  white-space: nowrap;
}
.layer-list th {
  height: 21px;
  padding-left: 3px;
}
.layer-list th.sep {
  border-left: 1px solid #e4e4e4;
}
.layer-list td:first-child {
  padding-left: 7px;
}
.layer-list td:nth-child(7) {
  padding-left: 3px;
}
.layer-list td:last-child, .layer-list th:last-child {
  padding-left: 3px;
}
.layer-list .current td {
  font-weight: bold;
  color: #111;
}
.layer-list td svg {
  width: 14px;
  height: 14px;
}
.swatch {
  display: block;
  width: 12px;
  height: 12px;
  margin-left: 2px;
  border: 1px solid #444;
}
.diamond {
  display: block;
  width: 9px;
  height: 9px;
  margin: 0 4px;
  border: 1px solid #333;
  transform: rotate(45deg);
}
.black { background: #000; }
.red { background: #d90000; }
.purple { background: #6c2ac4; }
.blue { background: #0000f0; }
.green { background: #006400; }
.white { background: #fff; }
.hscroll {
  display: flex;
  align-items: center;
  height: 16px;
  padding-right: 4px;
  background: #f0f0f0;
}
.hscroll button {
  width: 17px;
  display: flex;
  justify-content: center;
}
.hscroll svg {
  width: 8px;
  height: 10px;
  stroke: #444;
  stroke-width: 2;
}
.track {
  flex: 1;
  height: 15px;
}
.thumb {
  width: 88%;
  height: 15px;
  background: #c8c8c9;
}

/* osnap checkboxes */
.osnap {
  display: flex;
  align-items: center;
  gap: 6px;
  height: 29px;
  padding: 1px 0 0 8px;
  color: #8c8c8c;
}
.osnap label {
  display: flex;
  align-items: center;
  gap: 4px;
}
.osnap input {
  appearance: none;
  width: 11px;
  height: 12px;
  margin: 0;
  background: #fafafa;
  border: 1px solid #e4e4e4;
}
.osnap input:checked {
  background: linear-gradient(135deg, #fafafa 55%, #ccc 55%, #ccc 65%, #fafafa 65%);
}
.osnap .grey {
  background: #c4c4c4;
}
.osnap .filled {
  background: #70757c;
  border: 1px solid #4c5c7c;
  box-shadow: inset 0 0 0 2px #d4dbe8;
}
.osnap .disable {
  margin-left: 6px;
  color: #444;
}

/* status bar */
.status-row {
  height: 22px;
  padding-left: 4px;
  background: linear-gradient(#e9eaec 16px, #d9dbdd 16px);
}
.status {
  display: flex;
  width: 64%;
  height: 22px;
  background: linear-gradient(#eadc00 16px, #ddd000 16px);
  color: #58530f;
}
.status > * {
  height: 17px;
  margin-top: 1px;
  padding: 0 4px;
  border-right: 1px solid #cdc10a;
}
.status .s-plane {
  width: 44px;
  padding: 0;
  text-align: left;
}
.status .s-coord {
  width: 86px;
  text-align: center;
}
.status .s-layer {
  width: 168px;
  display: flex;
  align-items: center;
  gap: 3px;
  padding: 0 3px;
}
.s-layer i {
  width: 11px;
  height: 11px;
  background: #000;
}
.status .s-memory {
  border: none;
  padding: 0 2px;
}

/* taskbar */
.taskbar {
  display: flex;
  height: 34px;
  background: #d8dbde;
}
.taskbar button {
  width: 49px;
  display: flex;
  justify-content: center;
}
.taskbar button:first-child {
  width: 46px;
}
.taskbar svg {
  width: 24px;
  height: 28px;
}
.taskbar .open {
  background: linear-gradient(#1f66b0, #1f66b0) no-repeat center bottom / 39px 2px;
}
.taskbar .active {
  background: linear-gradient(#1f66b0, #1f66b0) no-repeat center bottom / 49px 2px, #f1f2f3;
}
.clock {
  margin-left: auto;
  padding-right: 2px;
  display: flex;
  flex-direction: column;
  align-items: center;
  line-height: 16px;
  color: #111;
}
.cursor {
  position: absolute;
  left: 773px;
  top: 1036px;
  width: 14px;
  height: 20px;
}
```
